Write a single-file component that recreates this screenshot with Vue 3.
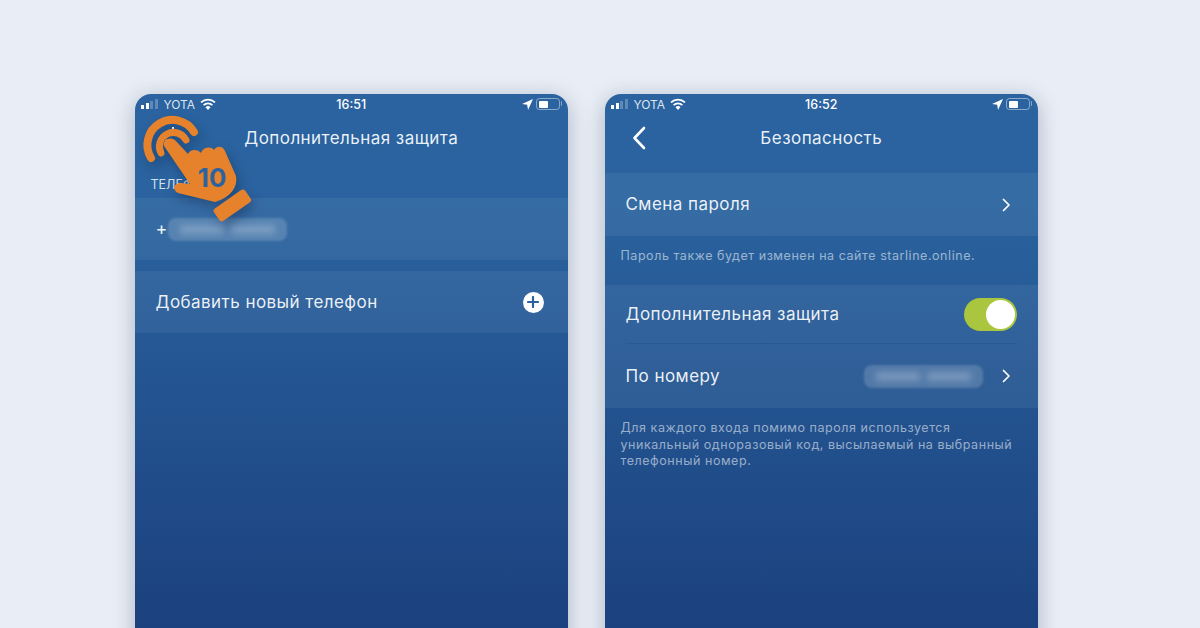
<script setup>
const phones = [
  { id: 'phones', time: '16:51', title: 'Дополнительная защита' },
  { id: 'security', time: '16:52', title: 'Безопасность' }
];
</script>

<template>
  <div class="page">
    <div v-for="phone in phones" :key="phone.id" class="phone">
      <div class="status">
        <div class="status-left">
          <div class="signal"><i></i><i></i><i class="dim"></i><i class="dim"></i></div>
          <span class="carrier">YOTA</span>
          <svg class="wifi" viewBox="0 0 16 12" width="16" height="12">
            <path d="M8 12 5.5 9.2a3.6 3.6 0 0 1 5 0Z" fill="#fff" />
            <path d="M3.6 7.2a6.4 6.4 0 0 1 8.8 0" fill="none" stroke="#fff" stroke-width="1.8" />
            <path d="M1 4.4a10.2 10.2 0 0 1 14 0" fill="none" stroke="#fff" stroke-width="1.8" />
          </svg>
        </div>
        <span class="time">{{ phone.time }}</span>
        <div class="status-right">
          <svg viewBox="0 0 12 12" width="11" height="11">
            <path d="M12 0 0 5.4l5.6.9L6.6 12Z" fill="#fff" />
          </svg>
          <div class="battery"><i></i></div>
        </div>
      </div>

      <div class="header">
        <svg v-if="phone.id === 'security'" class="back" viewBox="0 0 14 24" width="14" height="24">
          <path d="M12 2 2.5 12l9.5 10" fill="none" stroke="#fff" stroke-width="2.6" stroke-linecap="round" stroke-linejoin="round" />
        </svg>
        <span class="title">{{ phone.title }}</span>
      </div>

      <template v-if="phone.id === 'phones'">
        <div class="label">ТЕЛЕФОНЫ</div>
        <div class="row number-row">
          <span class="plus-sign">+</span>
          <div class="masked"><i></i><i></i></div>
        </div>
        <div class="row add-row">
          <span>Добавить новый телефон</span>
          <span class="add-icon">
            <svg viewBox="0 0 12 12" width="12" height="12">
              <path d="M6 1v10M1 6h10" stroke="#2a639f" stroke-width="2.2" stroke-linecap="round" />
            </svg>
          </span>
        </div>
      </template>

      <template v-else>
        <div class="row link-row">
          <span>Смена пароля</span>
          <svg class="chevron" viewBox="0 0 9 14" width="9" height="14">
            <path d="M1.5 1.5 7 7l-5.5 5.5" fill="none" stroke="#fff" stroke-width="1.7" stroke-linecap="round" stroke-linejoin="round" />
          </svg>
        </div>
        <p class="note first">Пароль также будет изменен на сайте starline.online.</p>
        <div class="group">
          <div class="row toggle-row">
            <span>Дополнительная защита</span>
            <div class="toggle"><i></i></div>
          </div>
          <div class="row link-row number-link">
            <span>По номеру</span>
            <div class="number-end">
              <div class="masked"><i></i><i></i></div>
              <svg class="chevron" viewBox="0 0 9 14" width="9" height="14">
                <path d="M1.5 1.5 7 7l-5.5 5.5" fill="none" stroke="#fff" stroke-width="1.7" stroke-linecap="round" stroke-linejoin="round" />
              </svg>
            </div>
          </div>
        </div>
        <p class="note">Для каждого входа помимо пароля используется уникальный одноразовый код, высылаемый на выбранный телефонный номер.</p>
      </template>
    </div>

    <!-- tap gesture over the first phone's back button -->
    <svg class="gesture" viewBox="0 0 130 120" width="130" height="120">
      <path d="M36 35l2 3M43 22v2" stroke="#dfe8f2" stroke-width="2" />
      <path d="M21 53A25 25 0 1 1 64 27" fill="none" stroke="#e5822b" stroke-width="8" stroke-linecap="round" />
      <path d="M31 48A14 14 0 1 1 56 35" fill="none" stroke="#e5822b" stroke-width="7" stroke-linecap="round" />
      <path d="M34 41C32 35 40 31 45 35L58 49C60 44 68 44 71 48 73 42 81 41 84 45 87 40 93 41 95 46L106 71C108 82 101 92 85 97L48 88C42 85 44 78 50 78L60 79Z" fill="#e5822b" />
      <rect x="83" y="93" width="38" height="15" rx="3" transform="rotate(-35 102 100)" fill="#e5822b" />
      <text x="68" y="82" class="count">10</text>
    </svg>
  </div>
</template>

<style>
body {
  margin: 0;
  background: #e9eef6;
}
</style>

<style scoped>
.page {
  position: relative;
  box-sizing: border-box;
  display: flex;
  gap: 37.5px;
  width: 1200px;
  height: 628px;
  padding: 94px 0 0 135px;
  overflow: hidden;
  background: #e9eef6;
  font-family: Inter, "Noto Sans", sans-serif;
  color: #fff;
}

.phone {
  width: 432.5px;
  height: 560px;
  border-radius: 16px 16px 0 0;
  background: linear-gradient(#2a639f 0, #2a639f 20%, #1a3f7c 100%);
  box-shadow: 0 4px 22px rgba(40, 60, 90, 0.32);
  overflow: hidden;
}

.status {
  position: relative;
  display: flex;
  align-items: center;
  justify-content: space-between;
  height: 20px;
  padding: 0 6.5px 0 6px;
}

.status-left {
  display: flex;
  align-items: center;
}

.signal {
  display: flex;
  align-items: flex-end;
  gap: 1.5px;
  height: 10px;
  margin-right: 6px;
}

.signal i {
  width: 3px;
  background: #fff;
}

.signal i:nth-child(1) { height: 4px; }
.signal i:nth-child(2) { height: 6px; }
.signal i:nth-child(3) { height: 8px; }
.signal i:nth-child(4) { height: 10px; }

.signal i.dim {
  background: rgba(255, 255, 255, 0.25);
}

.carrier {
  font-size: 12px;
  color: rgba(255, 255, 255, 0.85);
}

.wifi {
  margin-left: 5px;
}

.time {
  position: absolute;
  left: 0;
  right: 0;
  text-align: center;
  font-size: 12.5px;
  font-weight: 500;
}

.status-right {
  display: flex;
  align-items: center;
  gap: 3px;
}

.battery {
  position: relative;
  box-sizing: border-box;
  width: 24px;
  height: 12px;
  margin-right: 1px;
  padding: 1.5px;
  border: 1px solid rgba(255, 255, 255, 0.45);
  border-radius: 3.5px;
}

.battery::after {
  content: "";
  position: absolute;
  right: -3px;
  top: 2px;
  width: 1.5px;
  height: 5px;
  border-radius: 0 1px 1px 0;
  background: rgba(255, 255, 255, 0.45);
}

.battery i {
  display: block;
  width: 9px;
  height: 100%;
  border-radius: 1px;
  background: #fff;
}

.header {
  position: relative;
  height: 59px;
  padding-top: 12px;
  box-sizing: border-box;
  text-align: center;
}

.back {
  position: absolute;
  left: 26.5px;
  top: 12px;
}

.title {
  display: block;
  font-size: 17px;
  line-height: 24px;
  letter-spacing: 0.45px;
  color: rgba(255, 255, 255, 0.92);
}

.label {
  height: 25px;
  padding-left: 15.5px;
  font-size: 12.5px;
  line-height: 23px;
  color: rgba(255, 255, 255, 0.82);
}

.row {
  display: flex;
  align-items: center;
  justify-content: space-between;
  box-sizing: border-box;
  height: 63px;
  padding: 0 20.5px;
  font-size: 17px;
  letter-spacing: 0.45px;
  color: rgba(255, 255, 255, 0.92);
  background: rgba(255, 255, 255, 0.06);
}

.row > span:first-child {
  margin-top: -2px;
}

.number-row {
  justify-content: flex-start;
  height: 62px;
}

.number-row > .plus-sign {
  margin-top: 0;
  font-size: 18px;
}

.add-row {
  height: 62px;
  margin-top: 11px;
  padding-right: 24px;
}

.add-row > span:first-child {
  margin-top: 0;
}

.link-row {
  padding-right: 26.5px;
}

.add-icon {
  display: flex;
  align-items: center;
  justify-content: center;
  width: 21px;
  height: 21px;
  border-radius: 50%;
  background: #fff;
}

.masked {
  display: flex;
  align-items: center;
  gap: 7px;
  box-sizing: border-box;
  width: 119px;
  height: 23px;
  padding: 0 12px;
  border-radius: 8px;
  background: rgba(255, 255, 255, 0.17);
  filter: blur(0.8px);
}

.masked i {
  flex: 1;
  height: 9px;
  background: rgba(255, 255, 255, 0.22);
  filter: blur(3px);
}

.chevron {
  flex: none;
}

.note {
  margin: 0;
  padding: 12px 18px 0 15.5px;
  font-size: 12.5px;
  line-height: 16.5px;
  letter-spacing: 0.55px;
  color: rgba(255, 255, 255, 0.55);
}

.note.first {
  height: 49px;
  box-sizing: border-box;
}

.group {
  background: rgba(255, 255, 255, 0.06);
}

.group .row {
  background: none;
}

.toggle-row {
  position: relative;
  height: 59px;
}

.toggle-row::after {
  content: "";
  position: absolute;
  left: 21px;
  right: 21px;
  bottom: 0;
  height: 1px;
  background: rgba(30, 70, 120, 0.3);
}

.number-link {
  height: 64px;
}

.number-link > span:first-child {
  margin-top: 0;
}

.number-end {
  display: flex;
  align-items: center;
  gap: 19px;
}

.toggle {
  display: flex;
  justify-content: flex-end;
  align-items: center;
  box-sizing: border-box;
  width: 53px;
  height: 33px;
  padding: 2px;
  border-radius: 17px;
  background: #a9c63e;
}

.toggle i {
  width: 29px;
  height: 29px;
  border-radius: 50%;
  background: #fff;
}

.gesture {
  position: absolute;
  left: 130px;
  top: 105px;
  filter: drop-shadow(3px 6px 6px rgba(10, 30, 70, 0.35));
}

.count {
  font-size: 26px;
  font-weight: 700;
  fill: #2a639f;
}
</style>
